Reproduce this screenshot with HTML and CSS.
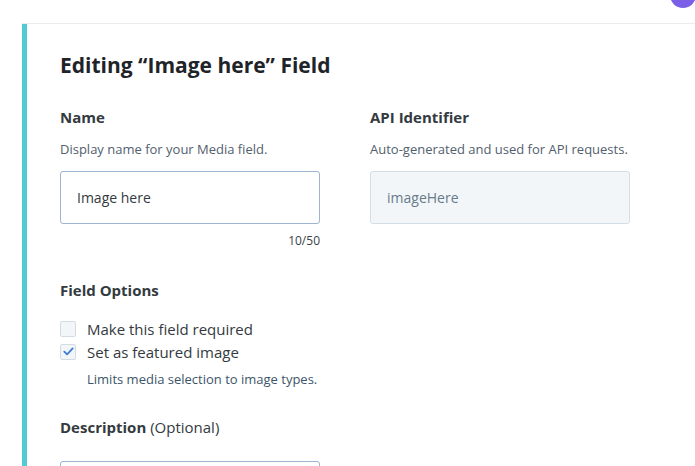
FILE: index.html
```html
<!DOCTYPE html>
<html>
<head>
<meta charset="utf-8">
<link rel="stylesheet" href="styles.css">
</head>
<body>
<div class="avatar"></div>
<div class="page">
  <div class="card">
    <div class="card-inner">
      <h1 class="title">Editing “Image here” Field</h1>
      <div class="row">
        <div class="col">
          <div class="label">Name</div>
          <div class="help">Display name for your Media field.</div>
          <div class="input">Image here</div>
          <div class="counter">10/50</div>
        </div>
        <div class="col">
          <div class="label">API Identifier</div>
          <div class="help">Auto-generated and used for API requests.</div>
          <div class="input input-disabled">imageHere</div>
        </div>
      </div>
      <div class="label options-label">Field Options</div>
      <div class="options">
        <div class="check-row">
          <span class="box"></span>
          <span class="check-text">Make this field required</span>
        </div>
        <div class="check-row">
          <span class="box">
            <svg width="11" height="9" viewBox="0 0 11 9"><path d="M1.3 4.6 L4.1 7.4 L9.7 1.4" fill="none" stroke="#3b7ed0" stroke-width="1.8" stroke-linecap="round" stroke-linejoin="round"/></svg>
          </span>
          <span class="check-text">Set as featured image</span>
        </div>
        <div class="check-help">Limits media selection to image types.</div>
      </div>
      <div class="label desc-label">Description <span class="optional">(Optional)</span></div>
      <div class="input desc-input"></div>
    </div>
  </div>
</div>
</body>
</html>
```
FILE: styles.css
```css
html, body {
  margin: 0;
  padding: 0;
  background: #ffffff;
  overflow: hidden;
  height: 466px;
}
body {
  font-family: "Open Sans", "Liberation Sans", sans-serif;
  color: #343a40;
  position: relative;
}
.avatar {
  position: absolute;
  left: 670px;
  top: -18px;
  width: 26px;
  height: 26px;
  border-radius: 50%;
  background: #7b5fe8;
}
.page {
  padding-top: 23px;
  padding-left: 22px;
  height: 466px;
  box-sizing: border-box;
}
.card {
  border-top: 1px solid #ececec;
  height: 100%;
  box-sizing: border-box;
  overflow: hidden;
}
.card-inner {
  border-left: 5px solid #52cad5;
  padding: 26px 0 0 33px;
  height: 100%;
  box-sizing: border-box;
}
.title {
  margin: 0;
  font-size: 21px;
  line-height: 30px;
  font-weight: 700;
  color: #1f2429;
}
.row {
  display: flex;
  gap: 50px;
  margin-top: 27px;
}
.col {
  width: 260px;
  display: flex;
  flex-direction: column;
}
.label {
  font-size: 15px;
  line-height: 20px;
  font-weight: 700;
  color: #343a40;
}
.help {
  margin-top: 13px;
  font-size: 13px;
  line-height: 18px;
  color: #52606d;
}
.input {
  margin-top: 13px;
  box-sizing: border-box;
  height: 53px;
  border: 1px solid #9db5d1;
  border-radius: 3px;
  padding: 0 16px;
  display: flex;
  align-items: center;
  font-size: 14px;
  color: #343a40;
  background: #fff;
}
.input-disabled {
  background: #f2f6f9;
  border-color: #d4dee7;
  color: #687b8a;
}
.counter {
  margin-top: 9px;
  text-align: right;
  font-size: 12px;
  line-height: 16px;
  color: #3a3f44;
}
.options-label {
  margin-top: 31px;
}
.options {
  margin-top: 17px;
}
.check-row {
  display: flex;
  align-items: center;
  height: 23px;
}
.box {
  box-sizing: border-box;
  width: 16px;
  height: 16px;
  border: 1px solid #d3dbe3;
  border-radius: 2px;
  background: #f3f6f9;
  margin-right: 11px;
  display: flex;
  align-items: center;
  justify-content: center;
}
.check-text {
  font-size: 15px;
  color: #343a40;
}
.check-help {
  margin-top: 7px;
  margin-left: 27px;
  font-size: 13px;
  line-height: 18px;
  color: #3c5569;
}
.desc-label {
  margin-top: 29px;
}
.optional {
  font-weight: 400;
}
.desc-input {
  width: 260px;
  margin-top: 24px;
}
```
